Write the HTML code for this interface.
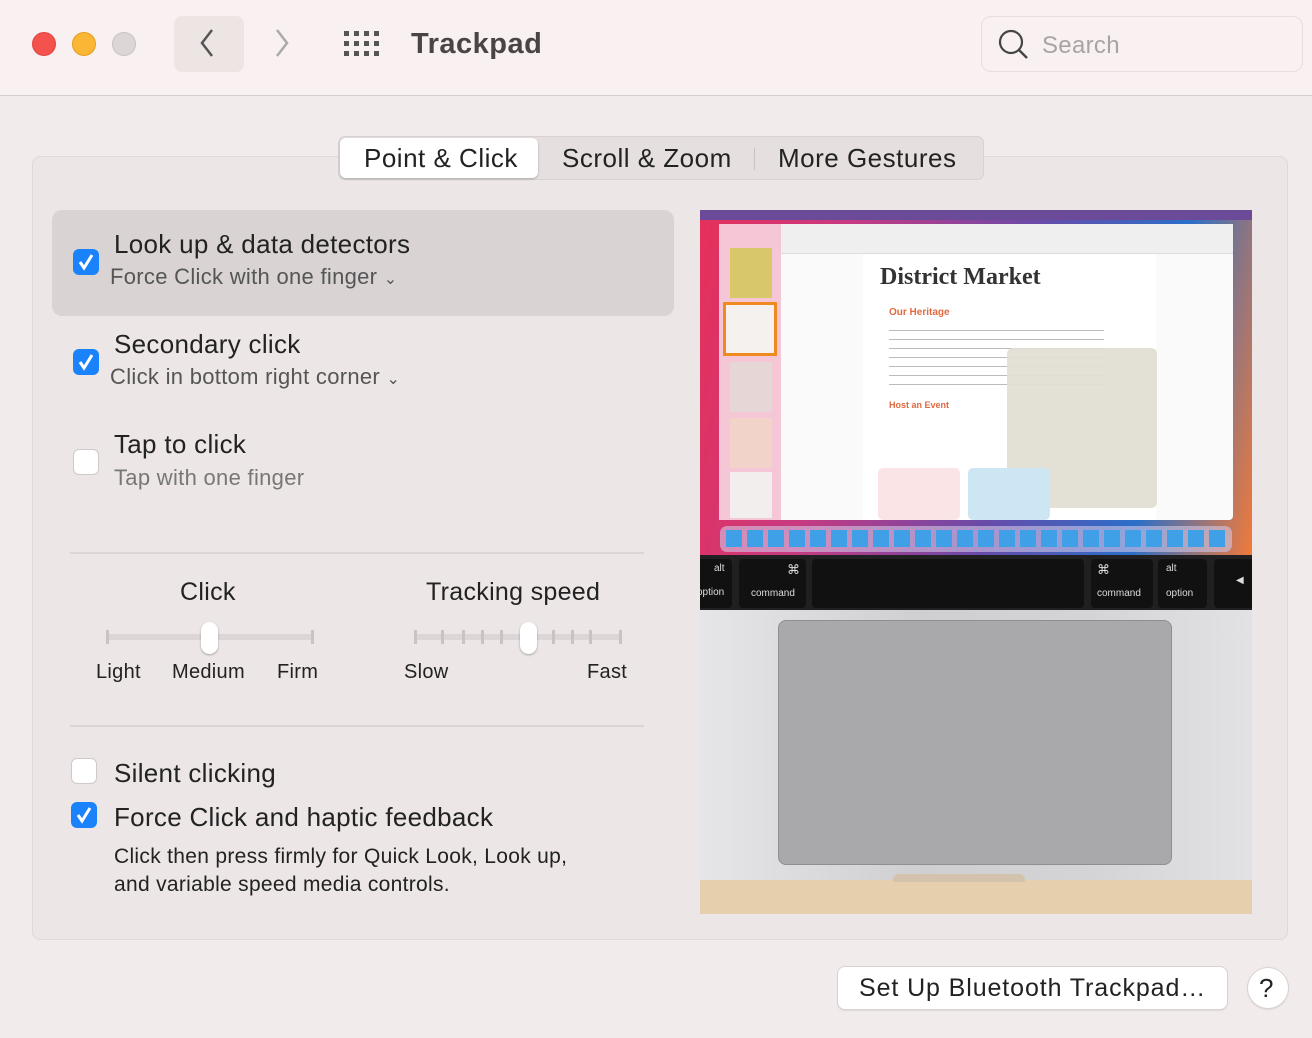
<!DOCTYPE html>
<html><head><meta charset="utf-8"><style>
*{margin:0;padding:0;box-sizing:border-box}
body{width:1312px;height:1038px;background:#f1ebeb;font-family:"Liberation Sans",sans-serif;color:#222;position:relative;overflow:hidden;letter-spacing:0.3px}
.a{position:absolute}
.t{white-space:nowrap}
.cb{position:absolute;width:26px;height:26px;border-radius:6px}
.on{background:#1a82fb}
.off{background:#fff;border:1px solid #cfc9c9}
.key{position:absolute;background:#111;border-radius:4px;color:#ddd;font-size:10px;letter-spacing:0}
</style></head><body>
<div class="a" style="left:0;top:0;width:1312px;height:96px;background:#f9f1f1;border-bottom:1px solid #d4cdcd"></div>
<div class="a" style="left:32px;top:32px;width:24px;height:24px;border-radius:50%;background:#f5524e;border:1px solid #e0443e"></div>
<div class="a" style="left:72px;top:32px;width:24px;height:24px;border-radius:50%;background:#fbb635;border:1px solid #e29d20"></div>
<div class="a" style="left:112px;top:32px;width:24px;height:24px;border-radius:50%;background:#dcd6d6;border:1px solid #c9c2c2"></div>
<div class="a" style="left:174px;top:16px;width:70px;height:56px;border-radius:8px;background:#ede4e4"></div>
<svg class="a" style="left:196px;top:28px" width="24" height="32"><path d="M16 2 L6 15 L16 28" stroke="#555" stroke-width="2.5" fill="none"/></svg>
<svg class="a" style="left:270px;top:28px" width="24" height="32"><path d="M7 2 L17 15 L7 28" stroke="#aaa" stroke-width="2.5" fill="none"/></svg>
<svg class="a" style="left:344px;top:31px" width="38" height="26" fill="#555">
<rect x="0" y="0" width="5" height="5"/><rect x="10" y="0" width="5" height="5"/><rect x="20" y="0" width="5" height="5"/><rect x="30" y="0" width="5" height="5"/>
<rect x="0" y="10" width="5" height="5"/><rect x="10" y="10" width="5" height="5"/><rect x="20" y="10" width="5" height="5"/><rect x="30" y="10" width="5" height="5"/>
<rect x="0" y="20" width="5" height="5"/><rect x="10" y="20" width="5" height="5"/><rect x="20" y="20" width="5" height="5"/><rect x="30" y="20" width="5" height="5"/></svg>
<div class="a t" style="left:411px;top:28px;font-size:29px;font-weight:bold;color:#4a4444;letter-spacing:0.5px">Trackpad</div>
<div class="a" style="left:981px;top:16px;width:322px;height:56px;border:1px solid #e6dede;border-radius:10px;background:#f9f1f1"></div>
<svg class="a" style="left:997px;top:28px" width="34" height="34"><circle cx="14" cy="14" r="11" stroke="#444" stroke-width="2.2" fill="none"/><path d="M22 22 L30 30" stroke="#444" stroke-width="2.4"/></svg>
<div class="a t" style="left:1042px;top:32px;font-size:24px;color:#a9a3a3">Search</div>

<div class="a" style="left:32px;top:156px;width:1256px;height:784px;background:#ece6e6;border:1px solid #e0d9d9;border-radius:8px"></div>
<div class="a" style="left:338px;top:136px;width:646px;height:44px;background:#e5dfdf;border-radius:7px;border:1px solid #d9d2d2"></div>
<div class="a" style="left:340px;top:138px;width:198px;height:40px;background:#fff;border-radius:6px;box-shadow:0 1px 2px rgba(0,0,0,.25)"></div>
<div class="a t" style="left:364px;top:143px;font-size:26px;color:#222;letter-spacing:0.5px">Point &amp; Click</div>
<div class="a t" style="left:562px;top:143px;font-size:26px;color:#222;letter-spacing:0.5px">Scroll &amp; Zoom</div>
<div class="a" style="left:754px;top:148px;width:1px;height:22px;background:#c9c2c2"></div>
<div class="a t" style="left:778px;top:143px;font-size:26px;color:#222;letter-spacing:0.5px">More Gestures</div>

<div class="a" style="left:52px;top:210px;width:622px;height:106px;background:#d9d3d3;border-radius:10px"></div>
<div class="cb on" style="left:73px;top:249px"></div>
<svg class="a" style="left:73px;top:249px" width="26" height="26"><path d="M7 13 L11 19 L19 6" stroke="#fff" stroke-width="3" fill="none"/></svg>
<div class="a t" style="left:114px;top:229px;font-size:26px">Look up &amp; data detectors</div>
<div class="a t" style="left:110px;top:264px;font-size:22px;color:#555">Force Click with one finger <span style="font-size:16px">⌄</span></div>

<div class="cb on" style="left:73px;top:349px"></div>
<svg class="a" style="left:73px;top:349px" width="26" height="26"><path d="M7 13 L11 19 L19 6" stroke="#fff" stroke-width="3" fill="none"/></svg>
<div class="a t" style="left:114px;top:329px;font-size:26px">Secondary click</div>
<div class="a t" style="left:110px;top:364px;font-size:22px;color:#555">Click in bottom right corner <span style="font-size:16px">⌄</span></div>

<div class="cb off" style="left:73px;top:449px"></div>
<div class="a t" style="left:114px;top:429px;font-size:26px">Tap to click</div>
<div class="a t" style="left:114px;top:465px;font-size:22px;color:#777">Tap with one finger</div>

<div class="a" style="left:70px;top:552px;width:574px;height:2px;background:#dcd5d5"></div>
<div class="a t" style="left:180px;top:578px;font-size:25px">Click</div>
<div class="a t" style="left:426px;top:578px;font-size:25px">Tracking speed</div>
<div class="a" style="left:106px;top:634px;width:208px;height:6px;background:#dcd6d6"></div>
<div class="a" style="left:106px;top:630px;width:3px;height:14px;background:#c9c3c3"></div>
<div class="a" style="left:311px;top:630px;width:3px;height:14px;background:#c9c3c3"></div>
<div class="a" style="left:201px;top:622px;width:17px;height:32px;border-radius:9px;background:#fff;box-shadow:0 1px 2px rgba(0,0,0,.3)"></div>
<div class="a t" style="left:96px;top:661px;font-size:20px">Light</div>
<div class="a t" style="left:172px;top:661px;font-size:20px">Medium</div>
<div class="a t" style="left:277px;top:661px;font-size:20px">Firm</div>
<div class="a" style="left:414px;top:634px;width:208px;height:6px;background:#dcd6d6"></div>
<div class="a" style="left:414px;top:630px;width:3px;height:14px;background:#c9c3c3"></div>
<div class="a" style="left:441px;top:630px;width:3px;height:14px;background:#c9c3c3"></div>
<div class="a" style="left:462px;top:630px;width:3px;height:14px;background:#c9c3c3"></div>
<div class="a" style="left:481px;top:630px;width:3px;height:14px;background:#c9c3c3"></div>
<div class="a" style="left:500px;top:630px;width:3px;height:14px;background:#c9c3c3"></div>
<div class="a" style="left:552px;top:630px;width:3px;height:14px;background:#c9c3c3"></div>
<div class="a" style="left:571px;top:630px;width:3px;height:14px;background:#c9c3c3"></div>
<div class="a" style="left:589px;top:630px;width:3px;height:14px;background:#c9c3c3"></div>
<div class="a" style="left:619px;top:630px;width:3px;height:14px;background:#c9c3c3"></div>
<div class="a" style="left:520px;top:622px;width:17px;height:32px;border-radius:9px;background:#fff;box-shadow:0 1px 2px rgba(0,0,0,.3)"></div>
<div class="a t" style="left:404px;top:661px;font-size:20px">Slow</div>
<div class="a t" style="left:587px;top:661px;font-size:20px">Fast</div>
<div class="a" style="left:70px;top:725px;width:574px;height:2px;background:#dcd5d5"></div>

<div class="cb off" style="left:71px;top:758px"></div>
<div class="a t" style="left:114px;top:758px;font-size:26px">Silent clicking</div>
<div class="cb on" style="left:71px;top:802px"></div>
<svg class="a" style="left:71px;top:802px" width="26" height="26"><path d="M7 13 L11 19 L19 6" stroke="#fff" stroke-width="3" fill="none"/></svg>
<div class="a t" style="left:114px;top:802px;font-size:26px">Force Click and haptic feedback</div>
<div class="a" style="left:114px;top:843px;font-size:21px;line-height:28px;width:494px">Click then press firmly for Quick Look, Look up, and variable speed media controls.</div>

<div class="a" style="left:700px;top:210px;width:552px;height:704px;overflow:hidden;background:#c9c9cb;letter-spacing:0">
 <div class="a" style="left:0;top:0;width:552px;height:345px;background:linear-gradient(100deg,#e6305a 0%,#c73a82 25%,#6a4aa8 55%,#2a6fc9 80%,#f07a3a 100%)"></div>
 <div class="a" style="left:0;top:0;width:552px;height:10px;background:#6c4a9a"></div>
 <div class="a" style="left:19px;top:14px;width:514px;height:296px;background:#fafafa;border-radius:4px"></div>
 <div class="a" style="left:19px;top:14px;width:62px;height:296px;background:#f4c6d6"></div>
 <div class="a" style="left:30px;top:38px;width:42px;height:50px;background:#d8c86a"></div>
 <div class="a" style="left:23px;top:92px;width:54px;height:54px;border:3px solid #f08a20;background:#f5f1ee"></div>
 <div class="a" style="left:30px;top:152px;width:42px;height:50px;background:#e7d6d6"></div>
 <div class="a" style="left:30px;top:208px;width:42px;height:50px;background:#f1d3c9"></div>
 <div class="a" style="left:30px;top:262px;width:42px;height:46px;background:#f2eeee"></div>
 <div class="a" style="left:81px;top:14px;width:452px;height:30px;background:#efefef;border-bottom:1px solid #ddd"></div>
 <div class="a" style="left:163px;top:44px;width:293px;height:266px;background:#fff"></div>
 <div class="a t" style="left:180px;top:54px;font-family:'Liberation Serif',serif;font-size:24px;color:#333;font-weight:bold">District Market</div>
 <div class="a t" style="left:189px;top:97px;font-size:10px;color:#e06a40;font-weight:bold">Our Heritage</div>
 <div class="a" style="left:189px;top:115px;width:215px;height:62px;background:repeating-linear-gradient(#fff 0 5px,#bbb 5px 6px,#fff 6px 9px)"></div>
 <div class="a t" style="left:189px;top:190px;font-size:9px;color:#e06a40;font-weight:bold">Host an Event</div>
 <div class="a" style="left:307px;top:138px;width:150px;height:160px;background:rgba(225,222,210,.94);border-radius:6px"></div>
 <div class="a" style="left:178px;top:258px;width:82px;height:52px;background:#fbe4e6;border-radius:5px"></div>
 <div class="a" style="left:268px;top:258px;width:82px;height:52px;background:#cde6f3;border-radius:5px"></div>
 <div class="a" style="left:20px;top:316px;width:512px;height:26px;background:rgba(210,200,230,.6);border-radius:7px"></div>
 <div class="a" style="left:26px;top:320px;width:500px;height:17px;background:repeating-linear-gradient(90deg,#3fa0e8 0 16px,transparent 16px 21px)"></div>
 <div class="a" style="left:0;top:345px;width:552px;height:55px;background:#202022"></div>
 <div class="key" style="left:-4px;top:349px;width:36px;height:49px"><span class="a" style="left:18px;top:4px">alt</span><span class="a" style="left:1px;top:28px">option</span></div>
 <div class="key" style="left:39px;top:349px;width:67px;height:49px"><span class="a" style="left:48px;top:3px;font-size:13px">⌘</span><span class="a" style="left:12px;top:29px">command</span></div>
 <div class="key" style="left:112px;top:349px;width:272px;height:49px"></div>
 <div class="key" style="left:391px;top:349px;width:62px;height:49px"><span class="a" style="left:6px;top:3px;font-size:13px">⌘</span><span class="a" style="left:6px;top:29px">command</span></div>
 <div class="key" style="left:458px;top:349px;width:49px;height:49px"><span class="a" style="left:8px;top:4px">alt</span><span class="a" style="left:8px;top:29px">option</span></div>
 <div class="key" style="left:514px;top:349px;width:40px;height:49px"><span class="a" style="left:22px;top:16px">◀</span></div>
 <div class="a" style="left:0;top:400px;width:552px;height:272px;background:linear-gradient(90deg,#e6e6e8,#cfcfd1 40%,#d4d4d6 70%,#e2e2e4)"></div>
 <div class="a" style="left:78px;top:410px;width:394px;height:245px;background:#a9a9ab;border:1px solid #8f8f91;border-radius:8px"></div>
 <div class="a" style="left:0;top:670px;width:552px;height:34px;background:#e6cfad"></div>
 <div class="a" style="left:193px;top:664px;width:132px;height:8px;background:#d4c3ac;border-radius:6px 6px 0 0"></div>
</div>

<div class="a" style="left:838px;top:967px;width:389px;height:42px;background:#fff;border-radius:7px;box-shadow:0 0 0 1px #d9d2d2,0 1px 2px rgba(0,0,0,.2)"></div>
<div class="a t" style="left:859px;top:974px;font-size:25px;letter-spacing:0.9px">Set Up Bluetooth Trackpad…</div>
<div class="a" style="left:1248px;top:968px;width:40px;height:40px;border-radius:50%;background:#fff;box-shadow:0 0 0 1px #d9d2d2,0 1px 2px rgba(0,0,0,.2)"></div>
<div class="a t" style="left:1259px;top:973px;font-size:26px">?</div>
</body></html>
